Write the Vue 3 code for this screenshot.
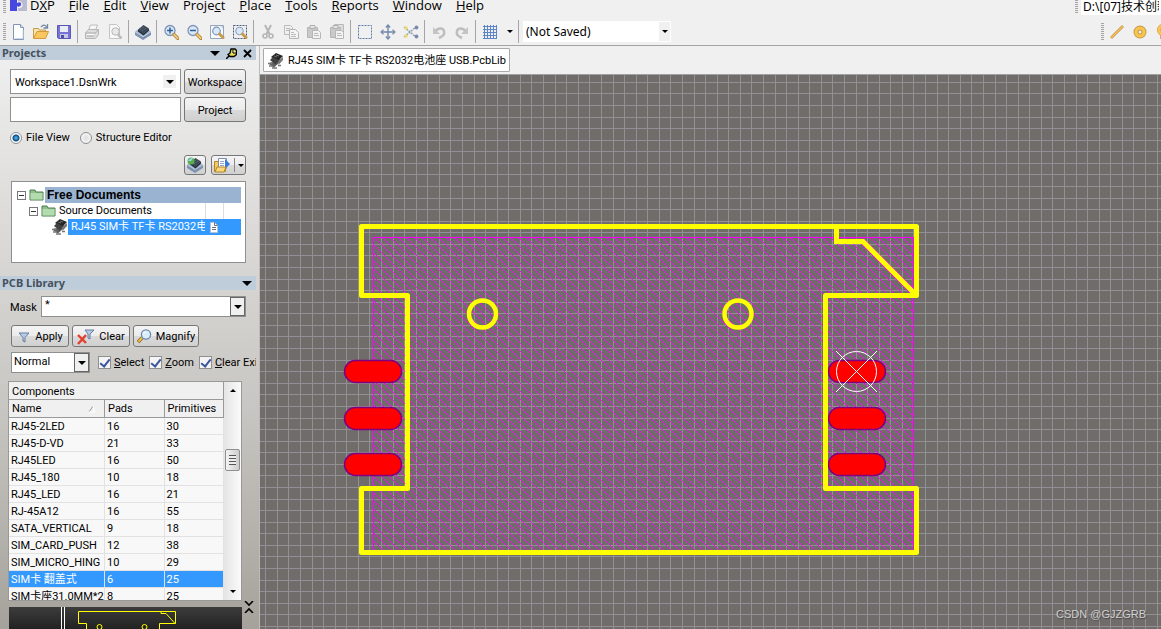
<script setup>
import { ref } from 'vue'

const menus = [
  ['D', 'X', 'P'], ['', 'F', 'ile'], ['', 'E', 'dit'], ['', 'V', 'iew'], ['Proje', 'c', 't'],
  ['', 'P', 'lace'], ['', 'T', 'ools'], ['', 'R', 'eports'], ['', 'W', 'indow'], ['', 'H', 'elp'],
]

const lens = '<circle cx="7" cy="6.500" r="5" fill="#d8e8fa" stroke="#7f93b5" stroke-width="1.300"/><path d="M11 10.500l4 4" stroke="#b98a3a" stroke-width="3.400" stroke-linecap="round"/><path d="M11 10.500l3.600 3.600" stroke="#f2cf86" stroke-width="1.600" stroke-linecap="round"/>'
const page = '<path d="M1.500 1.500h13v13h-13z" fill="#f8fafc" stroke="#93a5bd"/><path d="M11 2h3v3z" fill="#c5d3e5"/><circle cx="7.500" cy="7" r="3.800" fill="#d8e8fa" stroke="#7f93b5" stroke-width="1.200"/><path d="M10.500 10l3.500 3.500" stroke="#c79b4f" stroke-width="3" stroke-linecap="round"/>'
const chip = '<path d="M0 8l8 5 8-5v3l-8 5-8-5z" fill="#7d92b0"/><path d="M0 7.500l8-5 8 5-8 5z" fill="#9eb5d0"/><path d="M3 5.500L8.500 1 14 4.500 8.500 9.500z" fill="#3b4654"/><path d="M3 5.500l5.500 4v2L3 7.500zM14 4.500v2l-5.500 5v-2z" fill="#222c38"/><path d="M5 5.500l5-3M7 7l5-3.500" stroke="#71808f" stroke-dasharray="1 1"/>'
const clipboard = '<path d="M1.500 3.500h10v10h-10z" fill="#c9c9c9" stroke="#b4b4b4"/><path d="M4 1.500h5v3H4z" fill="#e3e3e3" stroke="#b0b0b0"/><path d="M6.500 6.500h6l2 2v6h-8z" fill="#f2f2f2" stroke="#b7b7b7"/><path d="M8 9.500h4M8 11.500h5" stroke="#bbb"/>'

const icons = {
  create: '<path d="M3.500.5h7l3 3v12h-10z" fill="#fff" stroke="#8396b5"/><path d="M10.500.5v3h3" fill="#d6e1ef" stroke="#8396b5"/><path d="M5 14.500h8V6" stroke="#ccd9ea" fill="none"/>',
  open: '<path d="M.5 14V4.500h5l1 1.500h6v3" fill="#f9e5aa" stroke="#c69b4a"/><path d="M.5 14.500l3.500-7h11.500l-3 7z" fill="#f9c65f" stroke="#d39b38"/><path d="M8 3c2-2.500 4-2.500 6 .5M14.500 0v4h-4" fill="none" stroke="#7789a0" stroke-width="1.300"/>',
  save: '<path d="M1.500 1.500h13v13h-12l-1-1z" fill="#7774d4" stroke="#5b58b5"/><path d="M4 2h8v6H4z" fill="#e9edfa"/><path d="M4 10h8v4H4z" fill="#c6c6e9"/><path d="M5 11h3v3H5z" fill="#504da6"/>',
  print: '<path d="M4.500 6l2-5h7l-2 5" fill="#f7f7f7" stroke="#bcbcbc"/><path d="M1.500 8.500l3-3h10v5l-3 4h-10z" fill="#ddd" stroke="#b6b6b6"/><path d="M2 9h9.500l2.500-3M3 12h7" fill="none" stroke="#adadad"/><path d="M3 10h7v1H3z" fill="#fff"/>',
  preview: '<path d="M2.500.5h7l3 3v11h-10z" fill="#f8f8f8" stroke="#c4c4c4"/><circle cx="8.500" cy="7.500" r="3.700" fill="#e8e8e8" stroke="#b9b9b9"/><path d="M11 10.500l3.500 4" stroke="#bbb" stroke-width="2.500"/>',
  chip,
  zoomIn: lens + '<path d="M4 6.500h6M7 3.500v6" stroke="#315d94" stroke-width="1.500"/>',
  zoomOut: lens + '<path d="M4 6.500h6" stroke="#315d94" stroke-width="1.500"/>',
  zoomPage: page,
  zoomArea: '<path d="M1.500 1.500h13v13h-13z" fill="none" stroke="#4a5d78" stroke-dasharray="2 1"/><circle cx="7.500" cy="7" r="3.800" fill="#d8e8fa" stroke="#8a9bb8"/><path d="M10.500 10l3.500 3.500" stroke="#c79b4f" stroke-width="3" stroke-linecap="round"/>',
  cut: '<path d="M5 1l4.500 9M11 1L6.500 10" stroke="#b5b5b5" stroke-width="2"/><circle cx="5" cy="12" r="2" fill="none" stroke="#b5b5b5" stroke-width="1.600"/><circle cx="11" cy="12" r="2" fill="none" stroke="#b5b5b5" stroke-width="1.600"/>',
  copy: '<path d="M1.500 1.500h6l2 2v7h-8z" fill="#f0f0f0" stroke="#bbb"/><path d="M3 4.500h4M3 6.500h3" stroke="#bbb"/><path d="M6.500 5.500h6l3 3v6h-9z" fill="#f4f4f4" stroke="#b4b4b4"/><path d="M8 8.500h3M8 10.500h5M8 12.500h5" stroke="#bbb"/>',
  paste: clipboard,
  pasteMany: '<path d="M5.500 0.500h9v9h-9z" fill="#ddd" stroke="#b9b9b9"/>' + clipboard,
  select: '<path d="M1.500 1.500h13v13h-13z" fill="none" stroke="#5e7fae" stroke-dasharray="2 1"/>',
  move: '<path d="M8 1v14M1 8h14" stroke="#7189ab" stroke-width="1.400"/><path d="M5.800 3.500L8 1l2.200 2.500M5.800 12.500L8 15l2.200-2.500M3.500 5.800L1 8l2.500 2.200M12.500 5.800L15 8l-2.500 2.200" stroke="#7189ab" stroke-width="1.200" fill="none"/>',
  route: '<path d="M1 3l12 10M1 13L13 3" stroke="#7f93b0" stroke-width="1.300" stroke-dasharray="2 1"/><circle cx="3" cy="4" r="1.800" fill="#f1d875"/><circle cx="3" cy="12" r="1.800" fill="#f1d875"/><circle cx="13.500" cy="3.500" r="1.900" fill="#788caf"/><circle cx="13.500" cy="12.500" r="1.900" fill="#788caf"/>',
  undo: '<path d="M4 8c2-4 8-5 9-1s-1 5-5 7" fill="none" stroke="#bebebe" stroke-width="2.600"/><path d="M2 3v7h7z" fill="#c4c4c4"/>',
  redo: '<path d="M12 8c-2-4-8-5-9-1s1 5 5 7" fill="none" stroke="#bebebe" stroke-width="2.600"/><path d="M14 3v7H7z" fill="#c4c4c4"/>',
  grid: '<path d="M2.500 1v14M5.500 1v14M8.500 1v14M11.500 1v14M14.500 1v14M1 2.500h14M1 5.500h14M1 8.500h14M1 11.500h14M1 14.500h14" stroke="#5d86c8"/>',
}

const groups = [
  ['create', 'open', 'save'],
  ['print', 'preview'],
  ['chip'],
  ['zoomIn', 'zoomOut', 'zoomPage', 'zoomArea'],
  ['cut', 'copy', 'paste', 'pasteMany'],
  ['select', 'move', 'route'],
  ['undo', 'redo'],
  ['grid'],
]

const part = '<path d="M1 11l5 3.500 6-5.500v-4l-6 4-4 .5z" fill="#5f5f5f"/><path d="M3 4l5-4 7 3-5 5z" fill="#262626"/><path d="M2 7l3-3 6 3.500-3.500 4z" fill="#414141"/><path d="M10.500 7.500L15 4v3l-4.500 5z" fill="#777"/><path d="M0 10.500h4M1 13h4M4 15h5M10 12.500h3" stroke="#777" stroke-width="1.500"/><path d="M6 3l3 1M8 2l3 1" stroke="#858585" stroke-width=".8"/>'
const folder = '<path d="M1 12V2h5l1 2h7v8z" fill="#8cbf8c" stroke="#4f7d50"/><path d="M1.500 5h12v6.500h-12z" fill="#b2dcae"/>'

const rows = [
  ['RJ45-2LED', 16, 30], ['RJ45-D-VD', 21, 33], ['RJ45LED', 16, 50], ['RJ45_180', 10, 18],
  ['RJ45_LED', 16, 21], ['RJ-45A12', 16, 55], ['SATA_VERTICAL', 9, 18], ['SIM_CARD_PUSH', 12, 38],
  ['SIM_MICRO_HING', 10, 29], ['SIM卡 翻盖式', 6, 25], ['SIM卡座31.0MM*2', 8, 25],
]
const current = ref(9)
const view = ref('file')
const filters = ref([
  { id: 'select', key: 'S', rest: 'elect', on: true },
  { id: 'zoom', key: 'Z', rest: 'oom', on: true },
  { id: 'clear', key: 'C', rest: 'lear Existing', on: true },
])

const pitch = 11.576
const xs = Array.from({ length: 240 }, (_, i) => Math.floor(5.74 + pitch * i))
const ys = Array.from({ length: 140 }, (_, i) => Math.floor(7.3 + pitch * i))
const gridPath = xs.map(x => `M${x}.5 0V1700`).join('') + ys.map(y => `M0 ${y}.5H2800`).join('')
const outline = 'M101.5 151.5H656.5V220.500H565.5V413.5H656.5V477.5H101.5V413.5H147.5V220.5H101.5Z'
const pads = [[84, 285], [84, 332], [84, 378], [568, 285], [568, 332], [568, 378]]
</script>

<template>
  <div class="app">
    <header class="menubar">
      <span class="grip"></span>
      <svg class="logo" width="17" height="12" viewBox="0 0 17 12" aria-hidden="true">
        <path d="M0 0h7v3c3-2 5 0 4 2s-3 2-4 1v5H0z" fill="#4848e0" />
        <path d="M8 0h9v11H8V8c3 1 6-2 4-5-1-2-3-2-4-1z" fill="#b9bbd0" />
      </svg>
      <nav class="menus">
        <button v-for="(m, i) in menus" :key="i" class="menu">{{ m[0] }}<u>{{ m[1] }}</u>{{ m[2] }}</button>
      </nav>
      <div class="address">
        <span class="grip"></span>
        <input class="path" value="D:\[07]技术创新" aria-label="Path" />
      </div>
    </header>

    <div class="toolbar">
      <span class="grip"></span>
      <div v-for="(g, i) in groups" :key="i" class="group">
        <button v-for="name in g" :key="name" class="tool" :aria-label="name">
          <svg width="16" height="16" viewBox="0 0 16 16" v-html="icons[name]"></svg>
        </button>
      </div>
      <button class="drop" aria-label="Grid options"><i class="arrow"></i></button>
      <div class="combo saved">
        <select aria-label="Saved view"><option>(Not Saved)</option></select>
        <span class="cap"><i class="arrow"></i></span>
      </div>
      <div class="drawing">
        <span class="grip"></span>
        <button class="tool" aria-label="Line">
          <svg width="16" height="16" viewBox="0 0 16 16"><path d="M2 14L14 2" stroke="#b88d56" stroke-width="2.600" /><path d="M2 14L14 2" stroke="#ffc64b" stroke-width="1.300" /></svg>
        </button>
        <button class="tool" aria-label="Pad">
          <svg width="16" height="16" viewBox="0 0 16 16"><circle cx="8" cy="8" r="4" fill="#f3eedf" stroke="#c5994f" stroke-width="5" /><circle cx="8" cy="8" r="4" fill="none" stroke="#f8c64c" stroke-width="3" /></svg>
        </button>
        <button class="tool" aria-label="Via">
          <svg width="16" height="16" viewBox="0 0 16 16"><path d="M5 9h6v6H5z" fill="#e6a06f" /><circle cx="8" cy="6" r="4" fill="#f3eedf" stroke="#c5994f" stroke-width="4" /><circle cx="8" cy="6" r="4" fill="none" stroke="#f8c64c" stroke-width="3" /></svg>
        </button>
      </div>
    </div>

    <div class="body">
      <aside class="side">
        <div class="panel-title">
          <h2>Projects</h2>
          <button aria-label="Panel menu"><i class="arrow big"></i></button>
          <button aria-label="Pin">
            <svg width="11" height="11" viewBox="0 0 11 11"><path d="M0 11l4-4" stroke="#000" stroke-width="1.500" /><path d="M5 1h4l1.500 1.500v4L8 8.500H4L2 6.500 4 5z" fill="#e7dc54" stroke="#000" stroke-width="1.300" /><path d="M7 2v3h3" fill="#fff" stroke="#000" /></svg>
          </button>
          <button aria-label="Close">
            <svg width="9" height="9" viewBox="0 0 9 9"><path d="M1 1l7 7M8 1L1 8" stroke="#000" stroke-width="1.800" /></svg>
          </button>
        </div>

        <div class="projects">
          <div class="combo framed">
            <select aria-label="Workspace file"><option>Workspace1.DsnWrk</option></select>
            <span class="cap"><i class="arrow big"></i></span>
          </div>
          <button class="btn">Workspace</button>
          <input class="field" aria-label="Project file" />
          <button class="btn">Project</button>
        </div>

        <div class="views">
          <label><input v-model="view" type="radio" value="file" />File View</label>
          <label><input v-model="view" type="radio" value="structure" />Structure Editor</label>
        </div>

        <div class="actions">
          <button class="btn" aria-label="Compile">
            <svg width="16" height="16" viewBox="0 0 16 16"><g v-html="chip"></g><circle cx="4" cy="4" r="3.500" fill="#58b04a" /><path d="M1 4c2-3 3-3 5-3L4 4z" fill="#9ad7ec" /></svg>
          </button>
          <button class="btn split" aria-label="Open project">
            <svg width="17" height="16" viewBox="0 0 17 16"><path d="M.5 14.500v-10h4l1 2h6v8z" fill="#f3c860" stroke="#b38528" /><path d="M4.500 1.500h8v10h-8z" fill="#fff" stroke="#7b8fac" /><path d="M6 4.500h4M6 6.500h4M6 8.500h4" stroke="#8fa6c9" /><path d="M11 2l5 5-5 5z" fill="#3b78dd" /><path d="M1 15l2-5h9l-2 5z" fill="#fbd77b" stroke="#b38528" /></svg>
            <i class="bar"></i><i class="arrow"></i>
          </button>
        </div>

        <div class="tree">
          <div class="node root">
            <span class="box"></span>
            <svg width="16" height="14" viewBox="0 0 16 14" v-html="folder"></svg>
            <strong>Free Documents</strong>
          </div>
          <div class="node mid">
            <span class="box"></span>
            <svg width="16" height="14" viewBox="0 0 16 14" v-html="folder"></svg>
            <span class="name">Source Documents</span><i class="cell"></i><i class="cell"></i>
          </div>
          <div class="node leaf">
            <svg width="16" height="16" viewBox="0 0 16 16" v-html="part"></svg>
            <span class="picked">
              <span class="name">RJ45 SIM卡 TF卡 RS2032电池座 USB.PcbLib</span>
              <svg width="10" height="11" viewBox="0 0 10 11"><path d="M1.500.5h4l3 3v7h-7z" fill="#fff" stroke="#b4c4d4" /><path d="M5.500.5v3h3M3 5.500h4M3 7.500h4" fill="none" stroke="#66717c" /></svg>
            </span>
          </div>
        </div>

        <div class="panel-title">
          <h2>PCB Library</h2>
          <button aria-label="Library menu"><i class="arrow big"></i></button>
        </div>

        <div class="mask">
          <label for="mask">Mask</label>
          <div class="combo framed">
            <input id="mask" value="*" />
            <button class="cap edged" aria-label="Mask history"><i class="arrow big"></i></button>
          </div>
        </div>

        <div class="commands">
          <button class="btn">
            <svg width="14" height="14" viewBox="0 0 14 14"><path d="M2 3h10L8 7.500V12l-2-1V7.500z" fill="#b9cce4" stroke="#627c9f" /></svg>Apply
          </button>
          <button class="btn">
            <svg width="18" height="16" viewBox="0 0 18 16"><path d="M8 1h9l-4 4v5l-2-1V5z" fill="#b9cce4" stroke="#627c9f" /><path d="M1 6l8 8M9 6l-8 9" stroke="#e2402d" stroke-width="2.400" /></svg>Clear
          </button>
          <button class="btn">
            <svg width="15" height="15" viewBox="0 0 15 15"><path d="M1 13l4-4" stroke="#8b6a28" stroke-width="3.500" /><path d="M1.500 12.500l4-4" stroke="#f0bd43" stroke-width="2" /><circle cx="9" cy="5.500" r="4.600" fill="#d9eefb" stroke="#6b86ad" stroke-width="1.300" /><path d="M6.500 5c0-1.500 1-2 2.500-2" stroke="#fff" fill="none" /></svg>Magnify
          </button>
        </div>

        <div class="options">
          <div class="combo framed">
            <select aria-label="Highlight mode"><option>Normal</option></select>
            <span class="cap edged"><i class="arrow big"></i></span>
          </div>
          <label v-for="f in filters" :key="f.id"><input v-model="f.on" type="checkbox" /><span><u>{{ f.key }}</u>{{ f.rest }}</span></label>
        </div>

        <div class="library">
          <div class="list">
            <table>
              <caption>Components</caption>
              <colgroup><col class="c-name" /><col class="c-num" /><col class="c-num" /></colgroup>
              <thead>
                <tr>
                  <th>Name<svg class="sort" width="8" height="8" viewBox="0 0 8 8"><path d="M1 7l4-6" stroke="#999" fill="none" /><path d="M5 1l2 6H1" stroke="#fff" fill="none" /></svg></th>
                  <th>Pads</th>
                  <th>Primitives</th>
                </tr>
              </thead>
              <tbody>
                <tr v-for="(r, i) in rows" :key="r[0]" :class="{ current: i === current }" @click="current = i">
                  <td v-for="(c, j) in r" :key="j">{{ c }}</td>
                </tr>
              </tbody>
            </table>
          </div>
          <div class="scroll">
            <i class="arrow up"></i>
            <span class="thumb"></span>
            <i class="arrow"></i>
          </div>
        </div>

        <div class="mini-row">
          <div class="mini">
            <svg width="233" height="24" viewBox="0 0 233 24">
              <path d="M52.5 0v24M55.5 0v24" stroke="#fff" />
              <path d="M77.500 24v-7.500h-8v-12h97v12h-16V24M152 4.500v2h5l9 10" fill="none" stroke="#ff0" />
              <circle cx="90.500" cy="20" r="2.500" fill="none" stroke="#ff0" /><circle cx="135.500" cy="20" r="2.500" fill="none" stroke="#ff0" />
            </svg>
          </div>
          <button class="fold" aria-label="Collapse preview">
            <svg width="10" height="12" viewBox="0 0 10 12"><path d="M1 0l4 4 4-4M1 12l4-4 4 4" fill="none" stroke="#000" stroke-width="1.600" /></svg>
          </button>
        </div>
      </aside>

      <main class="work">
        <div class="tabs">
          <button class="tab">
            <svg width="16" height="16" viewBox="0 0 16 16" v-html="part"></svg>RJ45 SIM卡 TF卡 RS2032电池座 USB.PcbLib
          </button>
        </div>
        <div class="canvas">
          <svg class="board" width="100%" height="100%" role="img" aria-label="Footprint SIM卡 翻盖式">
            <defs>
              <pattern id="hatch" width="8" height="8" patternUnits="userSpaceOnUse">
                <path d="M0 0h1v1H0zM1 1h1v1H1zM2 2h1v1H2zM3 3h1v1H3zM4 4h1v1H4zM5 5h1v1H5zM6 6h1v1H6zM7 7h1v1H7z" fill="#f0f" />
              </pattern>
            </defs>
            <g shape-rendering="crispEdges">
              <path :d="gridPath" stroke="#929094" fill="none" />
              <path d="M113 162H654V475H113z" fill="url(#hatch)" />
              <path d="M113.500 475V162.500H653.500V475" stroke="#f0f" fill="none" />
            </g>
            <rect v-for="(p, i) in pads" :key="i" :x="p[0] + .5" :y="p[1] + .5" width="57" height="22" rx="11" fill="#f00" stroke="#800080" stroke-width="1.500" />
            <path :d="outline" fill="none" stroke="#ff0" stroke-width="5" stroke-linejoin="round" />
            <path d="M576.500 151.500V166.500H603L656 220" fill="none" stroke="#ff0" stroke-width="5" />
            <circle cx="222.500" cy="239" r="13.500" fill="none" stroke="#ff0" stroke-width="4.500" />
            <circle cx="478" cy="239" r="13.500" fill="none" stroke="#ff0" stroke-width="4.500" />
            <g fill="none" stroke="#fff">
              <circle cx="596.500" cy="296.500" r="20" /><path d="M576 276l41 41M617 276l-41 41" />
            </g>
          </svg>
          <span class="credit">CSDN @GJZGRB</span>
        </div>
      </main>
    </div>
  </div>
</template>

<style>
body { margin: 0; overflow: hidden; }
</style>

<style scoped>
.app {
  height: 100vh;
  display: flex;
  flex-direction: column;
  background: #f0f0f0;
  color: #000;
  font: 11px/16px Roboto, "Liberation Sans", "Noto Sans CJK SC", sans-serif;
}
.app * { box-sizing: border-box; }
button, input, select { font: inherit; color: inherit; margin: 0; padding: 0; border: 0; background: none; border-radius: 0; }
svg { display: block; flex: none; }
.grip {
  width: 3px;
  flex: none;
  background: repeating-linear-gradient(#a4a4a4 0 1px, transparent 1px 2px);
}
.arrow {
  width: 0;
  height: 0;
  flex: none;
  border: 3px solid transparent;
  border-top-color: #000;
  border-bottom: 0;
}
.arrow.big { border-width: 4px; border-bottom: 0; }

.menubar { height: 18px; flex: none; display: flex; align-items: flex-start; padding-left: 3px; overflow: hidden; }
.menubar .grip { height: 13px; }
.logo { margin-left: 4px; }
.menus { display: flex; gap: 14px; margin-left: 3px; }
.menu { height: 11px; line-height: 11px; font-family: "Open Sans", "Noto Sans", sans-serif; font-size: 13px; white-space: nowrap; }
.menu u { text-underline-offset: 1px; }
.address { margin-left: auto; width: 86px; flex: none; display: flex; gap: 3px; }
.path { width: 80px; height: 15px; padding: 0 2px 3px; background: #fff; font-family: "Noto Sans", "Noto Sans CJK SC", sans-serif; font-size: 12px; line-height: 12px; }

.toolbar { height: 28px; flex: none; display: flex; align-items: center; padding-left: 3px; border-bottom: 1px solid #a3a3a3; overflow: hidden; }
.toolbar .grip { height: 18px; }
.group { display: flex; align-items: center; height: 23px; padding-right: 2px; margin-right: 2px; border-right: 1px solid #a5a5a5; }
.group:nth-last-of-type(3) { border-right: 0; padding: 0; margin: 0; }
.tool { width: 23px; height: 23px; display: grid; place-items: center; flex: none; }
.drop { width: 18px; height: 23px; display: grid; place-items: center; border-right: 1px solid #a5a5a5; }
.combo { display: flex; align-items: stretch; background: #fff; }
.combo select, .combo input { appearance: none; flex: 1; min-width: 0; outline: none; }
.cap { width: 15px; display: grid; place-items: center; background: #f0f0f0; flex: none; }
.cap.edged { border: 1px solid #666; }
.saved { width: 148px; height: 21px; margin-left: 4px; padding: 1px; font-family: "Noto Sans", sans-serif; font-size: 12px; }
.saved select { padding-left: 2px; }
.saved .cap { width: 11px; }
.drawing { margin-left: auto; width: 60px; display: flex; align-items: center; overflow: hidden; }
.drawing .grip { margin-right: 1px; }

.body { flex: 1; min-height: 0; display: flex; }
.side {
  width: 260px;
  flex: none;
  display: flex;
  flex-direction: column;
  padding-right: 3px;
  overflow: hidden;
  background: linear-gradient(#f0f0f0, #dcdbd9 30%, #c8c6c2 62%, #a5a29b);
  border-right: 1px solid #bcbcbc;
}
.panel-title { height: 14px; flex: none; display: flex; align-items: center; gap: 6px; padding: 0 4px 0 2px; background: #bfccda; }
.panel-title h2 { margin: 0; flex: 1; font: bold 11px/14px "Noto Sans", sans-serif; color: #46525e; }
.panel-title button { display: grid; place-items: center; }
.panel-title .arrow.big { border-width: 5px; border-bottom: 0; }

.projects { display: grid; grid-template-columns: 1fr 62px; gap: 3px; padding: 9px 10px 0; }
.combo.framed, .field { border: 1px solid #8e8f8f; background: #fff; height: 25px; min-width: 0; }
.field { width: 100%; }
.projects select { padding: 2px 0 0 4px; }
.projects .cap { margin: 5px 4px; width: 13px; }
.btn {
  display: flex;
  align-items: center;
  justify-content: center;
  gap: 4px;
  padding-top: 1px;
  border: 1px solid #777;
  border-radius: 3px;
  background: linear-gradient(#f4f4f4, #ebebeb 50%, #dadada 51%, #d0d0d0);
  white-space: nowrap;
}
.projects .btn { padding-top: 2px; }
.views { display: flex; gap: 10px; padding-left: 10px; margin-top: 7px; }
.views label, .options label { display: flex; align-items: center; gap: 4px; line-height: 17px; white-space: nowrap; }
.views input {
  appearance: none;
  width: 12px;
  height: 12px;
  border: 1px solid #8c8f94;
  border-radius: 50%;
  background: radial-gradient(#ddd, #fff);
}
.views input:checked { background: radial-gradient(circle, #3ba4dc 0 1px, #12487c 3px, #fff 4px); }
.actions { display: flex; justify-content: flex-end; gap: 5px; padding-right: 10px; margin-top: 9px; }
.actions .btn { width: 22px; height: 20px; padding: 0; }
.actions .split { width: 35px; gap: 3px; }
.bar { width: 1px; height: 14px; background: #888; }

.tree { height: 82px; margin: 6px 10px 0 11px; padding: 5px 4px 4px; background: #fff; border: 1px solid #8e8f8f; flex: none; }
.node { height: 16px; display: flex; align-items: center; }
.box {
  width: 9px;
  height: 9px;
  margin-left: 1px;
  margin-right: 3px;
  flex: none;
  border: 1px solid #777;
  background: linear-gradient(#333, #333) center / 5px 1px no-repeat;
}
.root strong { flex: 1; padding-left: 2px; background: #9ab3d0; font-family: "Liberation Sans", sans-serif; font-size: 12px; }
.mid { padding-left: 12px; }
.mid .name { flex: 1; padding-left: 2px; }
.cell { width: 18px; height: 16px; border-left: 1px solid #ddd; }
.leaf { padding-left: 36px; }
.picked { flex: 1; min-width: 0; display: flex; align-items: center; height: 16px; gap: 4px; padding: 0 22px 0 3px; background: #3399ff; color: #fff; }
.picked .name { flex: 1; white-space: nowrap; overflow: hidden; }
.tree + .panel-title { margin-top: 13px; }

.mask { display: flex; align-items: center; gap: 5px; padding: 0 10px; margin-top: 6px; }
.mask label { width: 26px; padding-top: 2px; }
.mask .combo { flex: 1; height: 21px; }
.mask input { padding: 0 3px 4px; }
.commands { display: flex; gap: 3px; padding-left: 11px; margin-top: 8px; }
.commands .btn { height: 22px; width: 58px; }
.commands .btn:last-child { width: 66px; }
.options { display: flex; align-items: center; padding-left: 11px; margin-top: 5px; gap: 5px; overflow: hidden; }
.options .combo { width: 79px; height: 21px; flex: none; margin-right: 3px; }
.options select { padding: 0 0 1px 2px; }
.options label { flex: none; gap: 3px; }
.options input {
  appearance: none;
  width: 13px;
  height: 13px;
  border: 1px solid #8e8f8f;
  background: #f4f4f4;
  position: relative;
}
.options input:checked::after {
  content: "";
  position: absolute;
  left: 3px;
  top: 0;
  width: 4px;
  height: 8px;
  border: solid #3a559c;
  border-width: 0 2px 2px 0;
  transform: rotate(38deg);
}

.library { flex: 1; min-height: 0; display: flex; margin: 8px 14px 0 8px; border: 1px solid #999; background: #f0f0f0; overflow: hidden; }
.list { flex: 1; overflow: hidden; }
table { width: 100%; table-layout: fixed; border-collapse: separate; border-spacing: 0; }
caption { height: 18px; padding: 1px 0 0 3px; text-align: left; line-height: 17px; border-bottom: 1px solid #999; border-right: 1px solid #999; }
.c-name { width: 96px; }
th { height: 18px; padding: 1px 0 0 3px; text-align: left; font-weight: normal; border-right: 1px solid #999; border-bottom: 1px solid #999; }
.sort { float: right; margin: 4px 8px 0 0; }
td { height: 17px; padding: 1px 0 0 2px; line-height: 15px; background: #f8f8f8; border-right: 1px solid #e2e2e2; border-bottom: 1px solid #e2e2e2; white-space: nowrap; overflow: hidden; }
.current td { background: #3399ff; color: #fff; }
.scroll { width: 17px; flex: none; display: flex; flex-direction: column; align-items: center; padding: 7px 0; background: linear-gradient(90deg, #e5e5e5, #fafafa); }
.scroll .up { transform: rotate(180deg); }
.thumb {
  width: 15px;
  height: 22px;
  margin: 57px 0 auto;
  border: 1px solid #8f8f8f;
  border-radius: 2px;
  background: repeating-linear-gradient(#555 0 1px, #eee 1px 3px) center / 7px 10px no-repeat, linear-gradient(90deg, #f4f4f4, #ccc);
}
.mini-row { display: flex; height: 28px; flex: none; }
.mini { width: 233px; height: 22px; margin: 6px 0 0 9px; overflow: hidden; background: linear-gradient(#3c3c3c, #222); }
.fold { align-self: flex-start; margin: 0 0 0 2px; }

.work { flex: 1; min-width: 0; display: flex; flex-direction: column; }
.tabs { height: 29px; flex: none; padding: 2px 3px; border-bottom: 1px solid #a0a0a0; }
.tab { height: 24px; display: flex; align-items: center; gap: 4px; padding: 1px 3px 0 4px; background: #fff; border: 1px solid #aaa; border-radius: 1px; white-space: nowrap; }
.canvas { flex: 1; min-height: 0; position: relative; overflow: hidden; background: #706c6a; }
.board { width: 100%; height: 100%; }
.credit { position: absolute; right: 15px; bottom: 7px; color: #d0d0d0; font-family: "Liberation Sans", sans-serif; text-shadow: 1px 1px 1px #444; }
</style>
